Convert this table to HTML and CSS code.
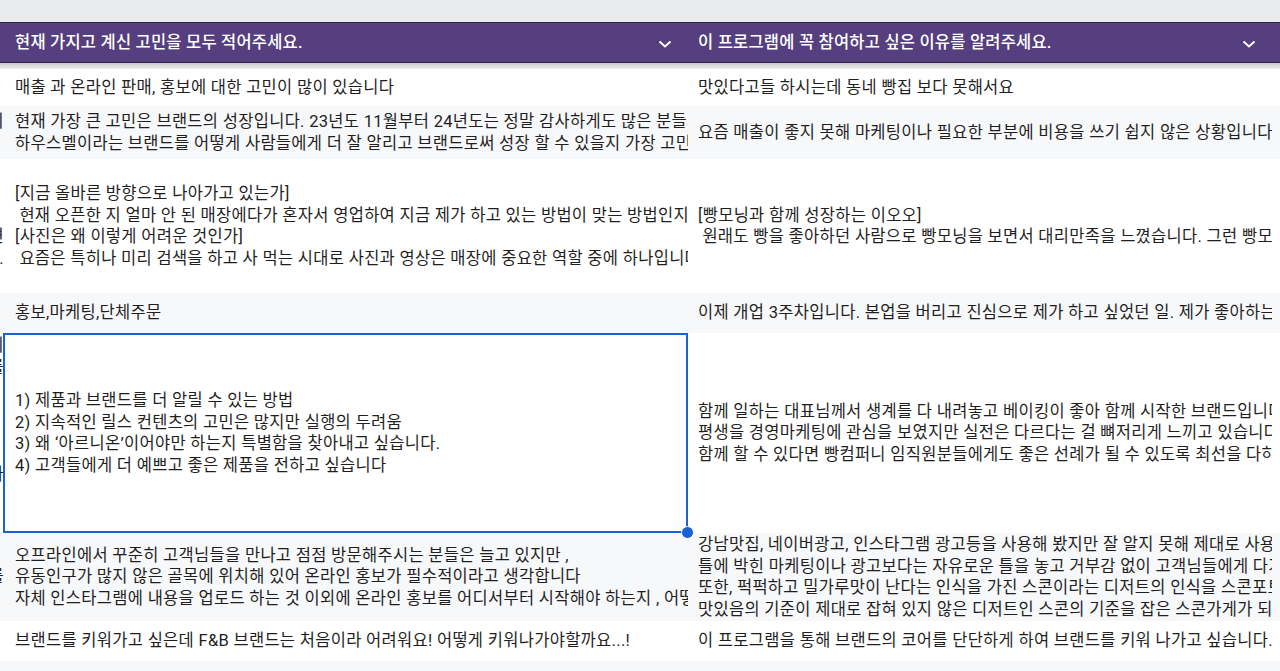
FILE: index.html
```html
<!DOCTYPE html>
<html lang="ko">
<head>
<meta charset="utf-8">
<title>Responses</title>
<link rel="stylesheet" href="styles.css">
</head>
<body>
<div class="topbar"></div>
<div class="grid header">
  <div class="cell sliver"></div>
  <div class="cell hcell left"><span class="htext">현재 가지고 계신 고민을 모두 적어주세요.</span><svg class="chev" width="14" height="8" viewBox="0 0 14 8"><path d="M1.5 1.5 L7 6.5 L12.5 1.5" fill="none" stroke="#fff" stroke-width="2"/></svg></div>
  <div class="cell hcell right"><span class="htext">이 프로그램에 꼭 참여하고 싶은 이유를 알려주세요.</span><svg class="chev" width="14" height="8" viewBox="0 0 14 8"><path d="M1.5 1.5 L7 6.5 L12.5 1.5" fill="none" stroke="#fff" stroke-width="2"/></svg></div>
  <div class="cell"></div>
</div>
<div class="shade"></div>

<div class="grid row r1 white">
  <div class="cell sliver"></div>
  <div class="cell left"><div class="ln">매출 과 온라인 판매, 홍보에 대한 고민이 많이 있습니다</div></div>
  <div class="cell right"><div class="ln">맛있다고들 하시는데 동네 빵집 보다 못해서요</div></div>
  <div class="cell"></div>
</div>

<div class="grid row r2 grey">
  <div class="cell sliver"><div class="ln">니</div><div class="ln">&nbsp;</div></div>
  <div class="cell left"><div class="ln">현재 가장 큰 고민은 브랜드의 성장입니다. 23년도 11월부터 24년도는 정말 감사하게도 많은 분들의 관심과 사랑을 받았습니다.</div><div class="ln">하우스멜이라는 브랜드를 어떻게 사람들에게 더 잘 알리고 브랜드로써 성장 할 수 있을지 가장 고민이 됩니다.</div></div>
  <div class="cell right"><div class="ln">요즘 매출이 좋지 못해 마케팅이나 필요한 부분에 비용을 쓰기 쉽지 않은 상황입니다</div></div>
  <div class="cell"></div>
</div>

<div class="grid row r3 white">
  <div class="cell sliver"><div class="ln">&nbsp;</div><div class="ln">&nbsp;</div><div class="ln">변</div><div class="ln">.</div></div>
  <div class="cell left"><div class="ln">[지금 올바른 방향으로 나아가고 있는가]</div><div class="ln"> 현재 오픈한 지 얼마 안 된 매장에다가 혼자서 영업하여 지금 제가 하고 있는 방법이 맞는 방법인지 확신이 서지 않습니다.</div><div class="ln">[사진은 왜 이렇게 어려운 것인가]</div><div class="ln"> 요즘은 특히나 미리 검색을 하고 사 먹는 시대로 사진과 영상은 매장에 중요한 역할 중에 하나입니다.</div></div>
  <div class="cell right"><div class="ln">[빵모닝과 함께 성장하는 이오오]</div><div class="ln"> 원래도 빵을 좋아하던 사람으로 빵모닝을 보면서 대리만족을 느꼈습니다. 그런 빵모닝과 함께 성장하고 싶습니다.</div></div>
  <div class="cell"></div>
</div>

<div class="grid row r4 grey">
  <div class="cell sliver"></div>
  <div class="cell left"><div class="ln">홍보,마케팅,단체주문</div></div>
  <div class="cell right"><div class="ln">이제 개업 3주차입니다. 본업을 버리고 진심으로 제가 하고 싶었던 일. 제가 좋아하는 일을 시작했습니다.</div></div>
  <div class="cell"></div>
</div>

<div class="grid row r5 white">
  <div class="cell sliver top"><div class="ln">히</div><div class="ln">를</div><div class="ln">&nbsp;</div><div class="ln">&nbsp;</div><div class="ln">&nbsp;</div><div class="ln">&nbsp;</div><div class="ln">다</div></div>
  <div class="cell left selected"><div class="ln">1) 제품과 브랜드를 더 알릴 수 있는 방법</div><div class="ln">2) 지속적인 릴스 컨텐츠의 고민은 많지만 실행의 두려움</div><div class="ln">3) 왜 ‘아르니온’이어야만 하는지 특별함을 찾아내고 싶습니다.</div><div class="ln">4) 고객들에게 더 예쁘고 좋은 제품을 전하고 싶습니다</div><span class="handle"></span></div>
  <div class="cell right"><div class="ln">함께 일하는 대표님께서 생계를 다 내려놓고 베이킹이 좋아 함께 시작한 브랜드입니다.</div><div class="ln">평생을 경영마케팅에 관심을 보였지만 실전은 다르다는 걸 뼈저리게 느끼고 있습니다.</div><div class="ln">함께 할 수 있다면 빵컴퍼니 임직원분들에게도 좋은 선례가 될 수 있도록 최선을 다하겠습니다.</div></div>
  <div class="cell"></div>
</div>

<div class="grid row r6 grey">
  <div class="cell sliver"><div class="ln">&nbsp;</div><div class="ln">를</div><div class="ln">&nbsp;</div></div>
  <div class="cell left"><div class="ln">오프라인에서 꾸준히 고객님들을 만나고 점점 방문해주시는 분들은 늘고 있지만 ,</div><div class="ln">유동인구가 많지 않은 골목에 위치해 있어 온라인 홍보가 필수적이라고 생각합니다</div><div class="ln">자체 인스타그램에 내용을 업로드 하는 것 이외에 온라인 홍보를 어디서부터 시작해야 하는지 , 어떻게 해야 하는지 궁금합니다.</div></div>
  <div class="cell right"><div class="ln">강남맛집, 네이버광고, 인스타그램 광고등을 사용해 봤지만 잘 알지 못해 제대로 사용하지 못했습니다.</div><div class="ln">틀에 박힌 마케팅이나 광고보다는 자유로운 틀을 놓고 거부감 없이 고객님들에게 다가가고 싶습니다.</div><div class="ln">또한, 퍽퍽하고 밀가루맛이 난다는 인식을 가진 스콘이라는 디저트의 인식을 스콘포토에서 바꾸고 싶습니다.</div><div class="ln">맛있음의 기준이 제대로 잡혀 있지 않은 디저트인 스콘의 기준을 잡은 스콘가게가 되고 싶습니다.</div></div>
  <div class="cell"></div>
</div>

<div class="grid row r7 white">
  <div class="cell sliver"></div>
  <div class="cell left"><div class="ln">브랜드를 키워가고 싶은데 F&amp;B 브랜드는 처음이라 어려워요! 어떻게 키워나가야할까요...!</div></div>
  <div class="cell right"><div class="ln">이 프로그램을 통해 브랜드의 코어를 단단하게 하여 브랜드를 키워 나가고 싶습니다.</div></div>
  <div class="cell"></div>
</div>

<div class="grid row r8 grey">
  <div class="cell sliver"></div>
  <div class="cell left"></div>
  <div class="cell right"></div>
  <div class="cell"></div>
</div>
</body>
</html>
```

FILE: styles.css
```css
html, body {
  margin: 0;
  padding: 0;
  background: #ffffff;
  overflow: hidden;
  height: 671px;
}
body {
  font-family: Roboto, "Noto Sans CJK KR", sans-serif;
  font-size: 16.5px;
  letter-spacing: 0.3px;
  color: #1f1f1f;
}
.topbar {
  height: 22px;
  background: #e9eaee;
  border-bottom: 1px solid #2f2446;
}
.grid {
  display: grid;
  grid-template-columns: 4px 684px 584px 1fr;
}
.header {
  height: 39px;
  background: #563f7e;
  border-bottom: 1px solid #2c2142;
  color: #ffffff;
}
.shade {
  height: 6px;
  background: linear-gradient(#c9c9cc, #ececee);
}
.cell {
  position: relative;
  display: flex;
  flex-direction: column;
  justify-content: center;
  overflow: hidden;
  white-space: pre;
  line-height: 21.5px;
}
.hcell {
  flex-direction: row;
  align-items: center;
  justify-content: space-between;
  overflow: visible;
}
.hcell.left { padding: 1px 16px 0 11px; }
.hcell.right { padding: 1px 16px 0 10px; }
.htext {
  font-size: 16.5px;
  font-weight: 500;
  letter-spacing: 0.2px;
}
.chev { display: block; margin-top: 2px; }
.sliver {
  align-items: flex-end;
}
.sliver.top { justify-content: flex-start; padding-top: 2px; }
.left { padding-left: 11px; }
.right { padding-left: 10px; }
.ln {
  white-space: pre;
  overflow: hidden;
  max-width: 100%;
}
.sliver .ln { overflow: visible; max-width: none; }
.white { background: #ffffff; }
.grey { background: #f7f8fa; }
.r1 { height: 37px; }
.r2 { height: 53px; }
.r3 { height: 134px; }
.r4 { height: 40px; }
.r5 { height: 200px; }
.r6 { height: 88px; }
.r7 { height: 40px; }
.r8 { height: 20px; }
.selected {
  overflow: visible;
  background: #ffffff;
  box-shadow: inset 0 0 0 2px #1a61d6;
  margin-left: -1px;
  padding-left: 12px;
  padding-right: 2px;
}
.handle {
  position: absolute;
  right: -6px;
  bottom: -6px;
  width: 11px;
  height: 11px;
  border-radius: 50%;
  background: #1a61d6;
  border: 1px solid #ffffff;
  z-index: 2;
}
```
